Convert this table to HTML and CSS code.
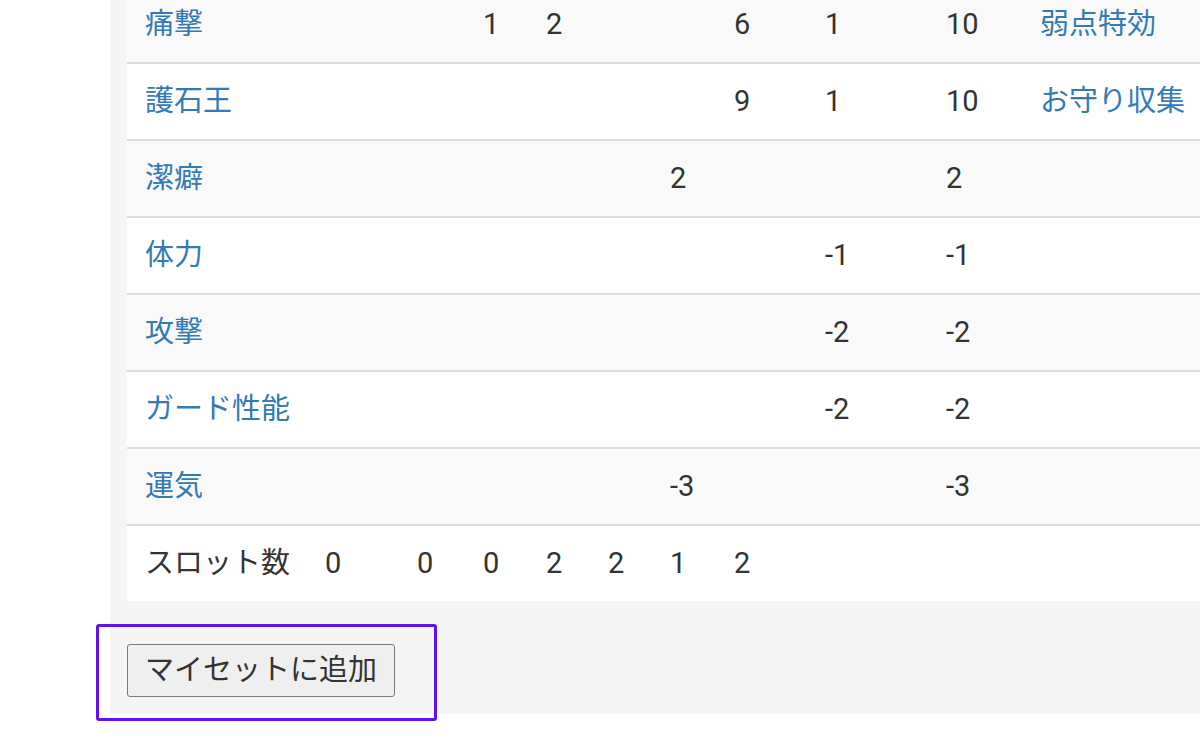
FILE: index.html
```html
<!DOCTYPE html>
<html lang="ja">
<head>
<meta charset="utf-8">
<title>護石</title>
<link rel="stylesheet" href="styles.css">
</head>
<body>
<div class="panel">
  <div class="table-wrap">
    <table class="skills">
      <colgroup>
        <col class="c-name"><col class="c2"><col class="c3"><col class="c4"><col class="c5"><col class="c6"><col class="c7"><col class="c8"><col class="c9"><col class="c10"><col class="c11">
      </colgroup>
      <tbody>
        <tr><td><a href="#">痛撃</a></td><td></td><td></td><td>1</td><td>2</td><td></td><td></td><td>6</td><td>1</td><td>10</td><td><a href="#">弱点特効</a></td></tr>
        <tr><td><a href="#">護石王</a></td><td></td><td></td><td></td><td></td><td></td><td></td><td>9</td><td>1</td><td>10</td><td><a href="#">お守り収集</a></td></tr>
        <tr><td><a href="#">潔癖</a></td><td></td><td></td><td></td><td></td><td></td><td>2</td><td></td><td></td><td>2</td><td></td></tr>
        <tr><td><a href="#">体力</a></td><td></td><td></td><td></td><td></td><td></td><td></td><td></td><td>-1</td><td>-1</td><td></td></tr>
        <tr><td><a href="#">攻撃</a></td><td></td><td></td><td></td><td></td><td></td><td></td><td></td><td>-2</td><td>-2</td><td></td></tr>
        <tr><td><a href="#">ガード性能</a></td><td></td><td></td><td></td><td></td><td></td><td></td><td></td><td>-2</td><td>-2</td><td></td></tr>
        <tr><td><a href="#">運気</a></td><td></td><td></td><td></td><td></td><td></td><td>-3</td><td></td><td></td><td>-3</td><td></td></tr>
        <tr><td>スロット数</td><td>0</td><td>0</td><td>0</td><td>2</td><td>2</td><td>1</td><td>2</td><td></td><td></td><td></td></tr>
      </tbody>
    </table>
  </div>
  <div class="actions">
    <button type="button" class="btn">マイセットに追加</button>
    <span class="focus-ring"></span>
  </div>
</div>
</body>
</html>
```

FILE: styles.css
```css
html {
  margin: 0;
  padding: 0;
  background: #ffffff;
  overflow: hidden;
}

body {
  margin: 0;
  padding: 0 0 26px;
  font-family: Roboto, "Noto Sans CJK JP", sans-serif;
  font-size: 29px;
  color: #333333;
}

.panel {
  margin-left: 110px;
  padding-left: 17px;
  background: #f5f5f5;
}

.table-wrap {
  margin-top: -15px;
  overflow: hidden;
}

.skills {
  border-collapse: collapse;
  table-layout: fixed;
  width: 1280px;
  background: #ffffff;
}

.c-name { width: 180px; }
.c2 { width: 92px; }
.c3 { width: 66px; }
.c4 { width: 63px; }
.c5 { width: 62px; }
.c6 { width: 62px; }
.c7 { width: 64px; }
.c8 { width: 91px; }
.c9 { width: 121px; }
.c10 { width: 94px; }
.c11 { width: 385px; }

.skills td {
  padding: 18px 0 18px 18px;
  line-height: 39px;
  border-top: 2px solid #dddddd;
  white-space: nowrap;
  text-align: left;
  vertical-align: middle;
}

.skills tr:nth-child(odd) td {
  background: #f9f9f9;
}

.skills a {
  color: #337ab7;
  text-decoration: none;
}

.actions {
  position: relative;
  padding: 43px 0 17px;
}

.btn {
  font-family: Roboto, "Noto Sans CJK JP", sans-serif;
  font-size: 29px;
  color: #333333;
  line-height: 37px;
  padding: 7px 17px;
  background: #efefef;
  border: 1px solid #7a7a7a;
  border-radius: 3px;
  margin: 0;
  display: block;
}

.focus-ring {
  position: absolute;
  left: -31px;
  top: 23px;
  width: 335px;
  height: 91px;
  border: 3px solid #5f12ee;
  border-radius: 3px;
  pointer-events: none;
}
```
